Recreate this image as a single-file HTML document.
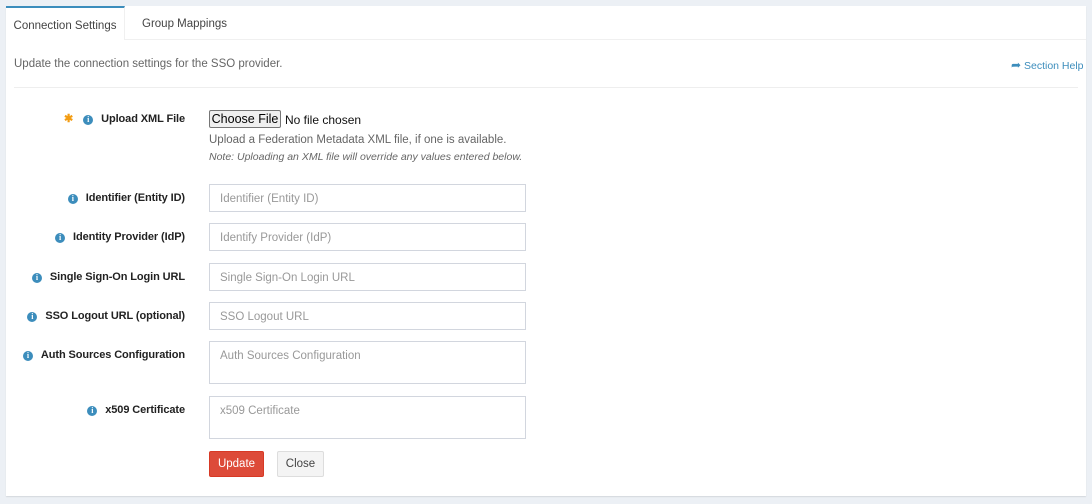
<!DOCTYPE html>
<html><head><style>
body{margin:0;background:#ecf0f5;font-family:"Liberation Sans",sans-serif;font-size:11.5px;color:#333;}
.card{position:absolute;left:6px;top:6px;width:1080px;height:490px;background:#fff;box-shadow:0 1px 1px rgba(0,0,0,.1);}
.tabs{position:absolute;left:0;top:0;width:1080px;height:33px;border-bottom:1px solid #f0f0f0;}
.tab{position:absolute;top:0;height:33px;line-height:36px;font-size:11.5px;color:#444;}
.t1{left:0;width:119px;border-top:2px solid #3c8dbc;border-right:1px solid #f0f0f0;text-align:center;background:#fff;box-sizing:border-box;height:34px}
.t2{left:136px}
.abs{position:absolute;}
.lbl{position:absolute;right:901px;font-weight:bold;color:#222;white-space:nowrap;font-size:11px;letter-spacing:-0.1px}
.i{display:inline-block;width:10px;height:10px;border-radius:50%;background:#3c8dbc;color:#fff;font-size:8px;line-height:10px;text-align:center;font-weight:bold;margin-right:8px;font-family:"Liberation Serif",serif;vertical-align:0}
.inp{position:absolute;left:203px;width:317px;height:28px;border:1px solid #d2d6de;box-sizing:border-box;color:#999;padding:8px 10px 0;font-size:11.5px}
.help{color:#666}
</style></head><body>
<div class="card">
<div class="tabs"><div class="tab t1">Connection Settings</div><div class="tab t2">Group Mappings</div></div>
<div class="abs" style="left:8px;top:52px;color:#666">Update the connection settings for the SSO provider.</div>
<div class="abs" style="left:1005px;top:52px;color:#3c8dbc;font-size:10.5px;white-space:nowrap"><span style="font-size:12px">&#10150;</span> Section Help</div>
<div class="abs" style="left:8px;top:81px;width:1064px;border-top:1px solid #eee"></div>

<div class="lbl" style="top:106px"><span style="color:#f39c12;margin-right:10px">&#10033;</span><span class="i">i</span>Upload XML File</div>
<div class="abs" style="left:203px;top:104px;width:72px;height:18px;border:1px solid #767676;background:#efefef;border-radius:2px;box-sizing:border-box;font-size:12.5px;text-align:center;line-height:16px;color:#000;white-space:nowrap;overflow:hidden">Choose File</div>
<div class="abs" style="left:279px;top:107px;font-size:12px;color:#111">No file chosen</div>
<div class="abs help" style="left:203px;top:128px">Upload a Federation Metadata XML file, if one is available.</div>
<div class="abs help" style="left:203px;top:145px;font-style:italic;font-size:10.5px">Note: Uploading an XML file will override any values entered below.</div>

<div class="lbl" style="top:186px"><span class="i">i</span>Identifier (Entity ID)</div>
<div class="inp" style="top:178px">Identifier (Entity ID)</div>
<div class="lbl" style="top:225px"><span class="i">i</span>Identity Provider (IdP)</div>
<div class="inp" style="top:217px">Identify Provider (IdP)</div>
<div class="lbl" style="top:265px"><span class="i">i</span>Single Sign-On Login URL</div>
<div class="inp" style="top:257px">Single Sign-On Login URL</div>
<div class="lbl" style="top:304px"><span class="i">i</span>SSO Logout URL (optional)</div>
<div class="inp" style="top:296px">SSO Logout URL</div>
<div class="lbl" style="top:343px"><span class="i">i</span>Auth Sources Configuration</div>
<div class="inp" style="top:335px;height:43px">Auth Sources Configuration</div>
<div class="lbl" style="top:398px"><span class="i">i</span>x509 Certificate</div>
<div class="inp" style="top:390px;height:43px">x509 Certificate</div>

<div class="abs" style="left:203px;top:445px;width:55px;height:26px;background:#dd4b39;border:1px solid #d73925;box-sizing:border-box;border-radius:2px;color:#fff;text-align:center;line-height:25px">Update</div>
<div class="abs" style="left:271px;top:445px;width:47px;height:26px;background:#f4f4f4;border:1px solid #ddd;box-sizing:border-box;border-radius:2px;color:#444;text-align:center;line-height:25px">Close</div>
</div>
</body></html>
